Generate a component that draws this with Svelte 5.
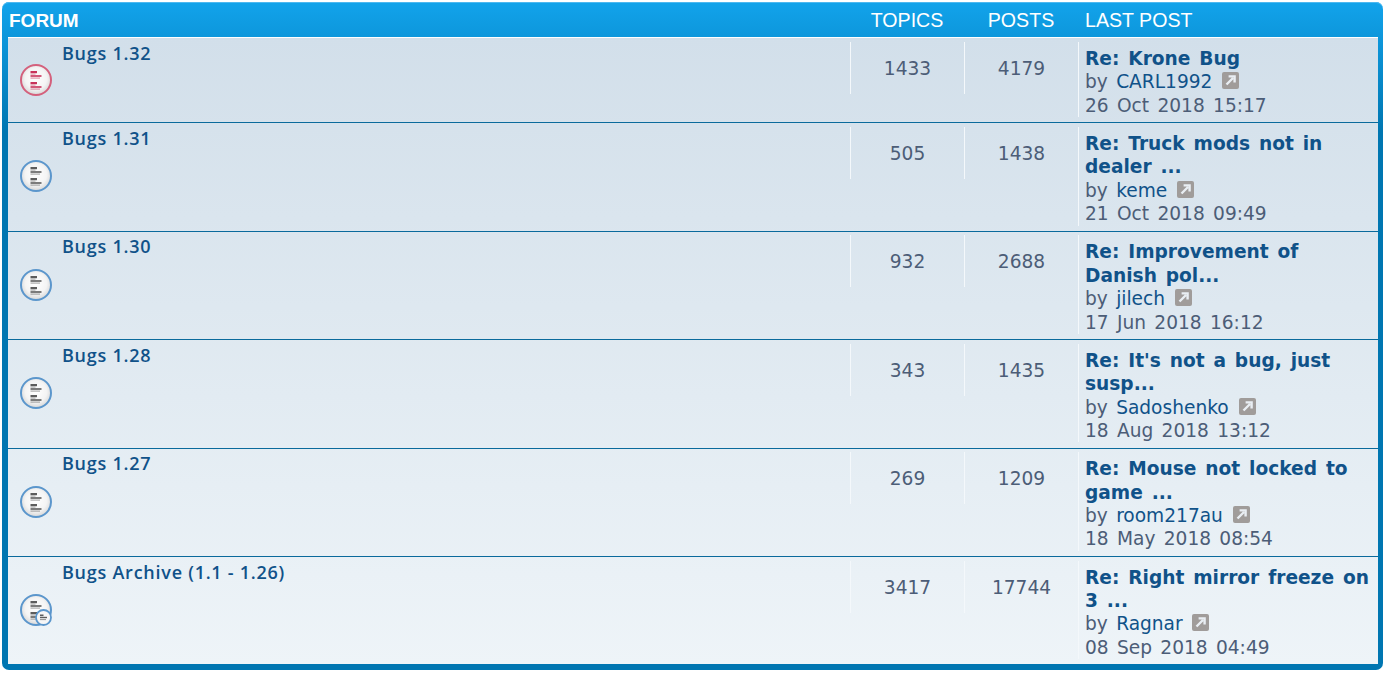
<script lang="ts">
  const forums = [
    { name: 'Bugs 1.32', topics: 1433, posts: 4179, title: ['Re: Krone Bug'], user: 'CARL1992', date: '26 Oct 2018 15:17', kind: 'unread' },
    { name: 'Bugs 1.31', topics: 505, posts: 1438, title: ['Re: Truck mods not in', 'dealer ...'], user: 'keme', date: '21 Oct 2018 09:49', kind: 'read' },
    { name: 'Bugs 1.30', topics: 932, posts: 2688, title: ['Re: Improvement of', 'Danish pol...'], user: 'jilech', date: '17 Jun 2018 16:12', kind: 'read' },
    { name: 'Bugs 1.28', topics: 343, posts: 1435, title: ["Re: It's not a bug, just", 'susp...'], user: 'Sadoshenko', date: '18 Aug 2018 13:12', kind: 'read' },
    { name: 'Bugs 1.27', topics: 269, posts: 1209, title: ['Re: Mouse not locked to', 'game ...'], user: 'room217au', date: '18 May 2018 08:54', kind: 'read' },
    { name: 'Bugs Archive (1.1 - 1.26)', topics: 3417, posts: 17744, title: ['Re: Right mirror freeze on', '3 ...'], user: 'Ragnar', date: '08 Sep 2018 04:49', kind: 'sub' },
  ];
</script>

<div class="forabg">
  <div class="head">
    <div class="h-forum">FORUM</div>
    <div class="h-num">TOPICS</div>
    <div class="h-num">POSTS</div>
    <div class="h-last">LAST POST</div>
  </div>
  <ul class="rows">
    {#each forums as f, i}
      <li class="row">
        <div class="forum">
          <svg class="icon" viewBox="0 0 32 32" width="32" height="32">
            <defs>
              <radialGradient id="disc-{i}" cx="50%" cy="45%" r="55%">
                <stop offset="0" stop-color="#ffffff" />
                <stop offset="0.65" stop-color="#f4f4f4" />
                <stop offset="1" stop-color="#d6d6d6" />
              </radialGradient>
            </defs>
            <circle cx="16" cy="16" r="15" fill="url(#disc-{i})" stroke={f.kind === 'unread' ? '#d4607c' : '#5b96cc'} stroke-width="2" />
            <g class={f.kind === 'unread' ? 'lines red' : 'lines'}>
              <rect x="10.5" y="7" width="6.5" height="2.2" />
              <rect x="10.5" y="9.6" width="5" height="1" opacity="0.5" />
              <rect x="10.5" y="11.2" width="11" height="1.6" />
              <rect x="10.5" y="13.5" width="9.5" height="1.2" opacity="0.5" />
              <rect x="10.5" y="18" width="6.5" height="2.2" />
              <rect x="10.5" y="20.6" width="5" height="1" opacity="0.5" />
              <rect x="10.5" y="22.2" width="11" height="1.6" />
              <rect x="10.5" y="24.5" width="9.5" height="1.2" opacity="0.5" />
            </g>
            {#if f.kind === 'sub'}
              <circle cx="23.5" cy="23.5" r="7.5" fill="#f6f6f6" stroke="#5b96cc" stroke-width="1.8" />
              <g class="lines">
                <rect x="20" y="20.5" width="3.5" height="1.6" />
                <rect x="20" y="22.8" width="7" height="1.4" />
                <rect x="20" y="25" width="6" height="1.1" opacity="0.6" />
              </g>
            {/if}
          </svg>
          <span class="name">{f.name}</span>
        </div>
        <div class="num">{f.topics}</div>
        <div class="num">{f.posts}</div>
        <div class="last">
          <span class="title">{f.title[0]}{#if f.title[1]}<br />{f.title[1]}{/if}</span>
          <span>by <span class="user">{f.user}</span>
            <svg class="go" viewBox="0 0 17 17" width="17" height="17">
              <rect width="17" height="17" rx="2" fill="#a09c9a" />
              <path d="M4.5 12.5 L11 6 M6.6 4.4 H12.6 V10.4" fill="none" stroke="#e9eef3" stroke-width="2.4" />
            </svg>
          </span>
          <span>{f.date}</span>
        </div>
      </li>
    {/each}
  </ul>
</div>

<style>
  :global(body) {
    margin: 0;
    background: #fff;
  }

  .forabg {
    margin: 2px 0 0 2px;
    width: 1381px;
    height: 668px;
    box-sizing: border-box;
    padding: 0 5px 6px 6px;
    border-radius: 7px;
    background: linear-gradient(to bottom, #12a3eb 0, #0076b1 130px, #0076b1 100%);
    box-shadow: inset 0 1px 0 #4db8f0;
    display: flex;
    flex-direction: column;
  }

  .head {
    height: 35.4px;
    box-sizing: border-box;
    padding-top: 2px;
    display: flex;
    align-items: center;
    color: #fff;
    font-family: "Liberation Sans", Arial, sans-serif;
    font-size: 19.6px;
    flex-shrink: 0;
  }

  .h-forum {
    flex: 1;
    padding-left: 1px;
    font-weight: bold;
    font-size: 19px;
  }

  .h-num {
    width: 114px;
    text-align: center;
  }

  .h-last {
    width: 300px;
    box-sizing: border-box;
    padding-left: 7px;
  }

  .rows {
    list-style: none;
    margin: 0;
    padding: 0;
    flex: 1;
    border-top: 1px solid #fff;
    background: linear-gradient(to bottom, #d2dfea, #eef4f8);
    font-family: "DejaVu Sans", Verdana, sans-serif;
    font-size: 18.6px;
    word-spacing: 2.4px;
    line-height: 23.4px;
    color: #4c5d77;
  }

  .row {
    display: flex;
    border-bottom: 1px solid #0a6a9c;
    padding: 3.6px 0 5.2px;
  }

  .row:last-child {
    border-bottom: 0;
  }

  .forum {
    flex: 1;
    display: flex;
    align-items: center;
    padding-left: 12px;
  }

  .icon {
    flex-shrink: 0;
  }

  .lines rect {
    fill: #5c5c5c;
  }

  .lines.red rect {
    fill: #c8325a;
  }

  .name {
    align-self: flex-start;
    margin-left: 10px;
    font-family: "Open Sans", sans-serif;
    font-weight: 600;
    font-size: 18px;
    letter-spacing: 0.75px;
    word-spacing: 0;
    line-height: 22px;
    color: #105289;
  }

  .num {
    width: 114px;
    height: 52px;
    box-sizing: border-box;
    border-left: 1px solid #f4f8fb;
    padding-top: 15px;
    text-align: center;
  }

  .last {
    width: 300px;
    box-sizing: border-box;
    border-left: 1px solid #f4f8fb;
    padding: 5px 0 0 6px;
    display: flex;
    flex-direction: column;
  }

  .title {
    font-weight: bold;
    color: #105289;
  }

  .user {
    color: #105289;
  }

  .go {
    vertical-align: -1px;
    margin-left: 1.5px;
  }
</style>
